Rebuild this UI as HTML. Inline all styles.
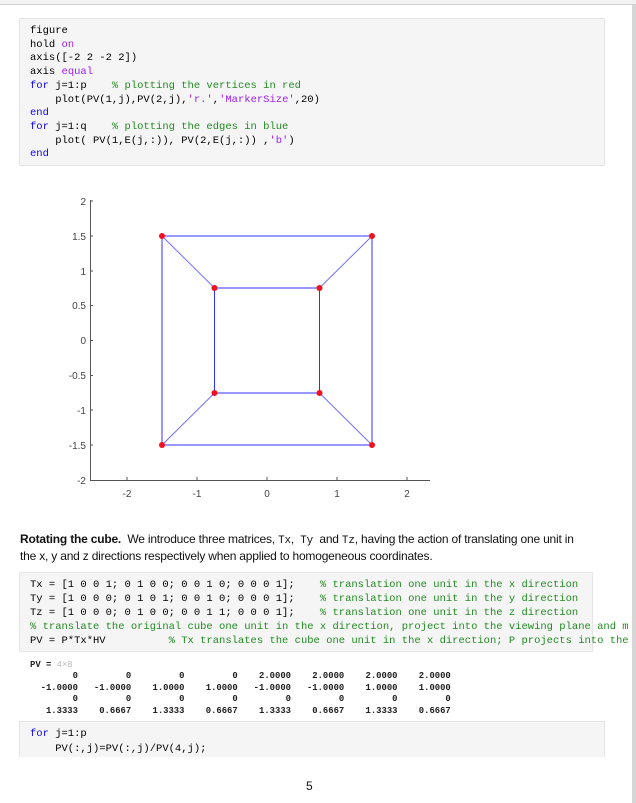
<!DOCTYPE html>
<html><head><meta charset="utf-8"><style>
*{margin:0;padding:0;box-sizing:border-box}
body{width:636px;height:803px;background:#fff;position:relative;overflow:hidden;font-family:"Liberation Sans",sans-serif}
.top{position:absolute;left:0;top:0;width:636px;height:5px;background:#f2f2f2;border-bottom:1px solid #cfcfcf}
.rbar{position:absolute;right:0;top:5px;width:4px;height:798px;background:#d6d6d6}
.box{position:absolute;background:#f5f5f5;border:1px solid #e6e6e6}
.code{position:absolute;font-family:"Liberation Mono",monospace;font-size:10.5px;white-space:pre;color:#000}
.k{color:#0e00ff}.s{color:#a020f0}.c{color:#228b22}
.out{position:absolute;font-family:"Liberation Mono",monospace;font-size:8.9px;font-weight:bold;color:#222;white-space:pre}
.p{position:absolute;left:20px;font-size:12px;color:#111;letter-spacing:-0.2px}
</style></head><body>
<div class="top"></div><div class="rbar"></div>
<div class="box" style="left:19px;top:18px;width:586px;height:148px"></div>
<div class="code" style="left:30px;top:25px;line-height:13.7px">figure
hold <span class="s">on</span>
axis([-2 2 -2 2])
axis <span class="s">equal</span>
<span class="k">for</span> j=1:p    <span class="c">% plotting the vertices in red</span>
    plot(PV(1,j),PV(2,j),<span class="s">'r.'</span>,<span class="s">'MarkerSize'</span>,20)
<span class="k">end</span>
<span class="k">for</span> j=1:q    <span class="c">% plotting the edges in blue</span>
    plot( PV(1,E(j,:)), PV(2,E(j,:)) ,<span class="s">'b'</span>)
<span class="k">end</span></div>
<svg style="position:absolute;left:0;top:0" width="636" height="520">
<g stroke="#555" stroke-width="1" fill="none">
<path d="M90.5 200V480.5H430"/>
<path d="M90 201h3M90 236h3M90 271h3M90 305.5h3M90 340.5h3M90 375.5h3M90 410h3M90 445h3"/>
<path d="M127 480v-3M197 480v-3M267 480v-3M337 480v-3M407 480v-3"/>
</g>
<g font-family="Liberation Sans" font-size="10" fill="#444" text-anchor="end">
<text x="86" y="205">2</text><text x="86" y="240">1.5</text><text x="86" y="275">1</text><text x="86" y="309">0.5</text><text x="86" y="344">0</text><text x="86" y="379">-0.5</text><text x="86" y="414">-1</text><text x="86" y="449">-1.5</text><text x="86" y="484">-2</text>
</g>
<g font-family="Liberation Sans" font-size="10" fill="#444" text-anchor="middle">
<text x="127" y="497">-2</text><text x="197" y="497">-1</text><text x="267" y="497">0</text><text x="337" y="497">1</text><text x="407" y="497">2</text>
</g>
<g stroke="#3030ff" stroke-width="1" fill="none">
<rect x="162" y="236" width="210" height="209"/>
<rect x="214.5" y="288" width="105" height="105"/>
<path d="M162 236L214.5 288M372 236L319.5 288M162 445L214.5 393M372 445L319.5 393" stroke="#7070ff"/>
</g>
<g fill="#f01020">
<circle cx="162" cy="236" r="3"/><circle cx="372" cy="236" r="3"/><circle cx="162" cy="445" r="3"/><circle cx="372" cy="445" r="3"/>
<circle cx="214.5" cy="288" r="3"/><circle cx="319.5" cy="288" r="3"/><circle cx="214.5" cy="393" r="3"/><circle cx="319.5" cy="393" r="3"/>
</g>
</svg>
<div class="p" style="top:532px"><b>Rotating the cube.</b>&nbsp; We introduce three matrices, <span style="font-family:'Liberation Mono';font-size:11px">Tx</span>, &nbsp;<span style="font-family:'Liberation Mono';font-size:11px">Ty</span> &nbsp;and <span style="font-family:'Liberation Mono';font-size:11px">Tz</span>, having the action of translating one unit in</div>
<div class="p" style="top:549px">the x, y and z directions respectively when applied to homogeneous coordinates.</div>
<div class="box" style="left:19px;top:572px;width:574px;height:80px"></div>
<div class="code" style="left:30px;top:578px;line-height:14px;width:598px;overflow:hidden">Tx = [1 0 0 1; 0 1 0 0; 0 0 1 0; 0 0 0 1];    <span class="c">% translation one unit in the x direction</span>
Ty = [1 0 0 0; 0 1 0 1; 0 0 1 0; 0 0 0 1];    <span class="c">% translation one unit in the y direction</span>
Tz = [1 0 0 0; 0 1 0 0; 0 0 1 1; 0 0 0 1];    <span class="c">% translation one unit in the z direction</span>
<span class="c">% translate the original cube one unit in the x direction, project into the viewing plane and ma</span>
PV = P*Tx*HV          <span class="c">% Tx translates the cube one unit in the x direction; P projects into the</span></div>
<div class="out" style="left:30px;top:660px;line-height:11.6px">PV = <span style="color:#bbb;font-weight:normal">4×8</span></div>
<div class="out" style="left:30px;top:671px;line-height:11.7px">        0         0         0         0    2.0000    2.0000    2.0000    2.0000
  -1.0000   -1.0000    1.0000    1.0000   -1.0000   -1.0000    1.0000    1.0000
        0         0         0         0         0         0         0         0
   1.3333    0.6667    1.3333    0.6667    1.3333    0.6667    1.3333    0.6667</div>
<div class="box" style="left:19px;top:721px;width:586px;height:36px;border-bottom:none"></div>
<div class="code" style="left:30px;top:727px;line-height:15px"><span class="k">for</span> j=1:p
    PV(:,j)=PV(:,j)/PV(4,j);</div>
<div style="position:absolute;left:306px;top:779px;font-size:12px;color:#111">5</div>
</body></html>
